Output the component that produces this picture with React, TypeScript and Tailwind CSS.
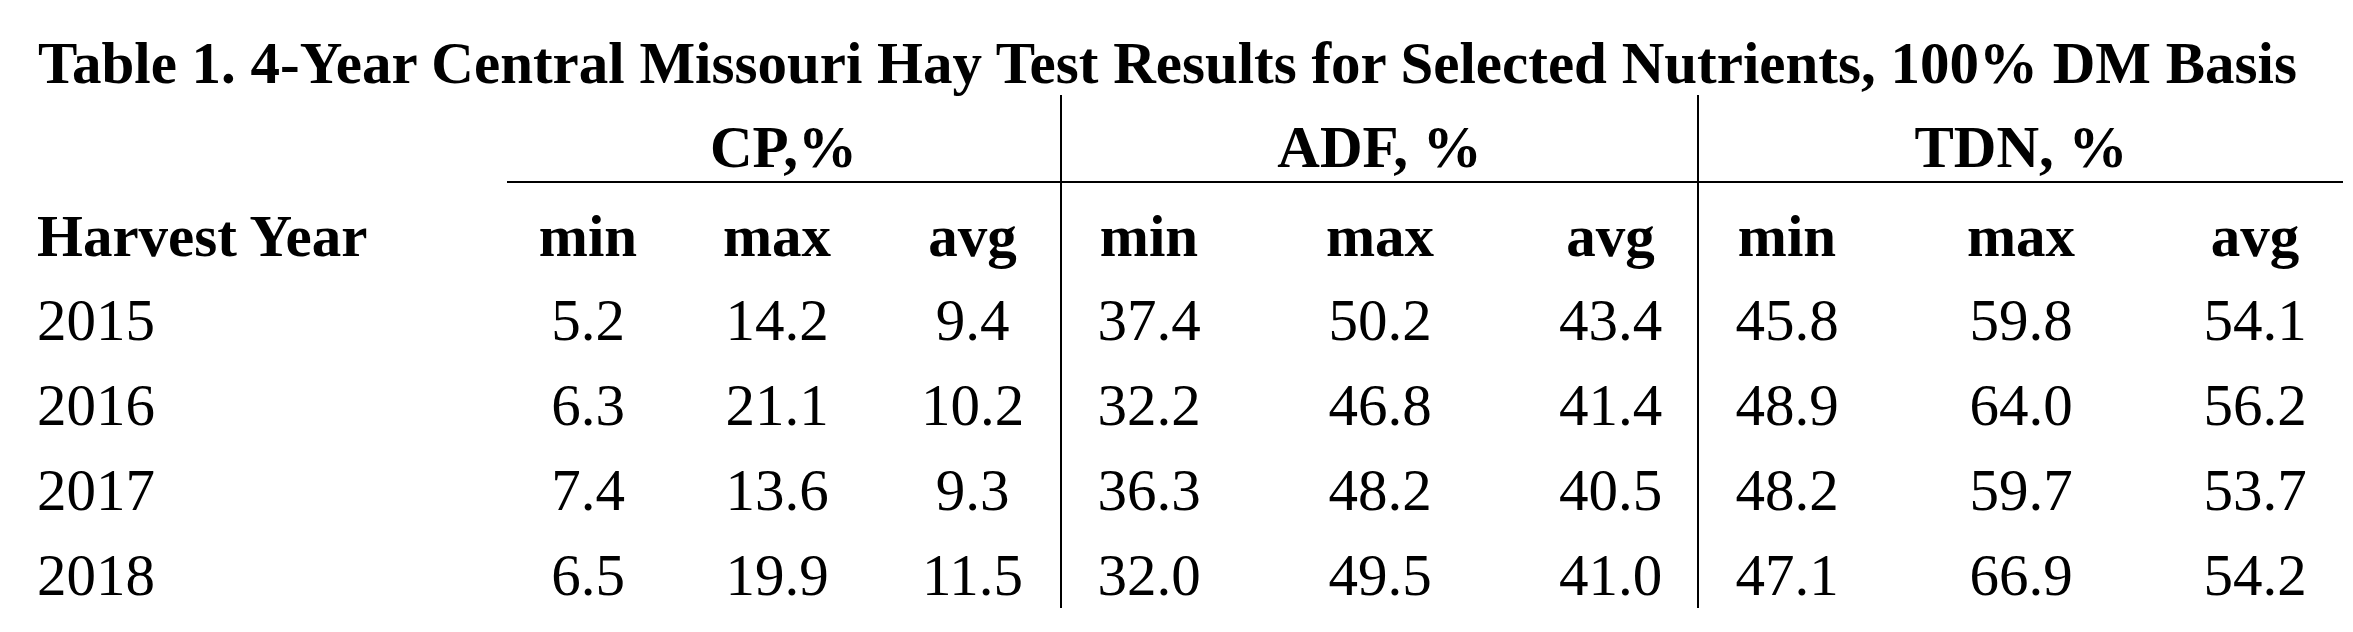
import React from "react";

const groups = ["CP,%", "ADF, %", "TDN, %"];
const sub = ["min", "max", "avg"];
const rows: [string, string[]][] = [
  ["2015", ["5.2", "14.2", "9.4", "37.4", "50.2", "43.4", "45.8", "59.8", "54.1"]],
  ["2016", ["6.3", "21.1", "10.2", "32.2", "46.8", "41.4", "48.9", "64.0", "56.2"]],
  ["2017", ["7.4", "13.6", "9.3", "36.3", "48.2", "40.5", "48.2", "59.7", "53.7"]],
  ["2018", ["6.5", "19.9", "11.5", "32.0", "49.5", "41.0", "47.1", "66.9", "54.2"]],
];

export default function App() {
  return (
    <div className="w-[2353px] h-[632px] bg-white text-black font-['Liberation_Serif','Times_New_Roman',serif] overflow-hidden">
      <div className="h-[95px] pt-[34px] pl-[38px] text-[59px] leading-none font-bold whitespace-nowrap">
        Table 1. 4-Year Central Missouri Hay Test Results for Selected Nutrients, 100% DM Basis
      </div>
      <div className="grid grid-cols-[507px_162px_216px_175px_176px_288px_173px_178px_292px_176px] text-[59px] leading-none">
        {/* group header row */}
        <div className="h-[88px]" />
        {groups.map((g, i) => (
          <div
            key={g}
            className={
              "col-span-3 h-[88px] flex items-end justify-center pb-[4px] font-bold border-b-2 border-black whitespace-nowrap " +
              (i > 0 ? "border-l-2" : "")
            }
          >
            {g}
          </div>
        ))}
        {/* column header row */}
        <div className="h-[85px] flex items-end pb-[2px] pl-[37px] font-bold whitespace-nowrap">Harvest Year</div>
        {[0, 1, 2, 3, 4, 5, 6, 7, 8].map((j) => (
          <div
            key={j}
            className={
              "h-[85px] flex items-end justify-center pb-[2px] font-bold border-black " +
              (j === 3 || j === 6 ? "border-l-2" : "")
            }
          >
            {sub[j % 3]}
          </div>
        ))}
        {/* data rows */}
        {rows.map(([year, vals]) => (
          <React.Fragment key={year}>
            <div className="h-[85px] flex items-end pb-[3px] pl-[37px]">{year}</div>
            {vals.map((v, j) => (
              <div
                key={j}
                className={
                  "h-[85px] flex items-end justify-center pb-[3px] border-black " +
                  (j === 3 || j === 6 ? "border-l-2" : "")
                }
              >
                {v}
              </div>
            ))}
          </React.Fragment>
        ))}
      </div>
    </div>
  );
}
